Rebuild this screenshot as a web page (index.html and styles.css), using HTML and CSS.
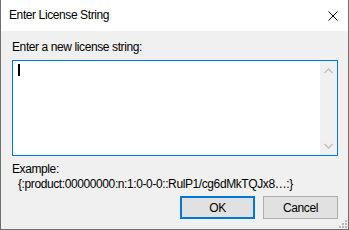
FILE: index.html
```html
<!DOCTYPE html>
<html lang="en">
<head>
<meta charset="UTF-8">
<title>Enter License String</title>
<link rel="stylesheet" href="styles.css">
</head>
<body>
<div class="window">
  <div class="titlebar">
    <span class="title">Enter License String</span>
    <svg class="close" viewBox="0 0 10 10" width="10" height="10" aria-label="Close">
      <path d="M0.5 0.5 L9.5 9.5 M9.5 0.5 L0.5 9.5" stroke="#000" stroke-width="1" fill="none"/>
    </svg>
  </div>
  <div class="content">
    <div class="label">Enter a new license string:</div>
    <div class="textbox">
      <div class="text-area"><span class="caret"></span></div>
      <div class="scrollbar">
        <svg viewBox="0 0 9 6" width="9" height="6"><path d="M0.5 5 L4.5 1 L8.5 5" stroke="#c2c2c2" stroke-width="1.4" fill="none"/></svg>
        <svg viewBox="0 0 9 6" width="9" height="6"><path d="M0.5 1 L4.5 5 L8.5 1" stroke="#c2c2c2" stroke-width="1.4" fill="none"/></svg>
      </div>
    </div>
    <div class="example">
      <div>Example:</div>
      <div class="example-value">{:product:00000000:n:1:0-0-0::RulP1/cg6dMkTQJx8…:}</div>
    </div>
    <div class="buttons">
      <button class="btn default">OK</button>
      <button class="btn">Cancel</button>
    </div>
  </div>
  <svg class="grip" viewBox="0 0 8 8" width="8" height="8">
    <rect x="6" y="0" width="2" height="2" fill="#b8b8b8"/>
    <rect x="3" y="3" width="2" height="2" fill="#b8b8b8"/>
    <rect x="6" y="3" width="2" height="2" fill="#b8b8b8"/>
    <rect x="0" y="6" width="2" height="2" fill="#b8b8b8"/>
    <rect x="3" y="6" width="2" height="2" fill="#b8b8b8"/>
    <rect x="6" y="6" width="2" height="2" fill="#b8b8b8"/>
  </svg>
</div>
</body>
</html>
```

FILE: styles.css
```css
* { box-sizing: border-box; }
html, body {
  margin: 0;
  padding: 0;
  background: #f0f0f0;
  font-family: "Liberation Sans", Arial, sans-serif;
  font-size: 12px;
  letter-spacing: -0.4px;
  color: #000;
}
.window {
  position: relative;
  width: 349px;
  height: 230px;
  background: #f0f0f0;
  border: 1px solid #707070;
  border-top: none;
  overflow: hidden;
}
.titlebar {
  height: 31px;
  background: #fff;
  display: flex;
  align-items: center;
  justify-content: space-between;
  padding: 0 10px 0 8px;
}
.title {
  font-size: 12px;
  padding-bottom: 1px;
}
.close {
  margin-top: 1px;
}
.content {
  padding: 9px 10px 0 11px;
}
.label {
  line-height: 15px;
}
.textbox {
  margin-top: 5px;
  height: 96px;
  border: 1px solid #0078d7;
  background: #fff;
  display: flex;
}
.text-area {
  flex: 1;
  padding: 3px 0 0 5px;
}
.caret {
  display: block;
  width: 2px;
  height: 12px;
  background: #000;
}
.scrollbar {
  width: 17px;
  background: #f0f0f0;
  display: flex;
  flex-direction: column;
  justify-content: space-between;
  align-items: center;
  padding: 7px 0 6px;
}
.example {
  margin-top: 6px;
  line-height: 15px;
}
.example-value {
  padding-left: 6px;
}
.buttons {
  display: flex;
  justify-content: flex-end;
  gap: 8px;
  margin-top: 4px;
}
.btn {
  width: 75px;
  height: 23px;
  font-family: inherit;
  font-size: 12px;
  letter-spacing: inherit;
  color: #000;
  background: #e1e1e1;
  border: 1px solid #adadad;
  padding: 0;
}
.btn.default {
  border: 2px solid #0078d7;
}
.grip {
  position: absolute;
  right: 1px;
  bottom: 1px;
}
```
